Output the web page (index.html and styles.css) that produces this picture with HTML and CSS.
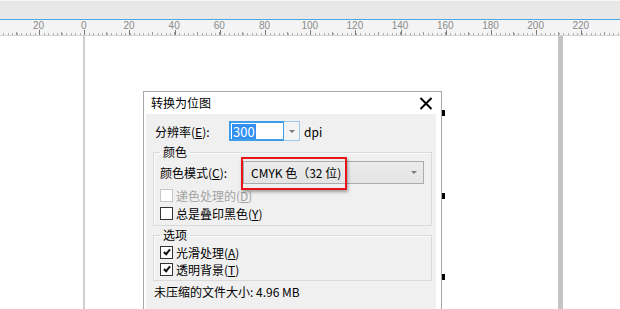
FILE: index.html
```html
<!DOCTYPE html>
<html lang="zh-CN">
<head>
    <meta charset="UTF-8">
    <title>转换为位图</title>
    <link rel="stylesheet" href="styles.css">
</head>
<body>
    <div class="topbar"></div>
    <div class="ruler">
        <div class="ruler-labels">
            <span>20</span><span>0</span><span>20</span><span>40</span><span>60</span><span>80</span><span>100</span>
            <span>120</span><span>140</span><span>160</span><span>180</span><span>200</span><span>220</span>
        </div>
    </div>

    <div class="canvas">
        <div class="page"></div>

        <span class="handle h1"></span>
        <span class="handle h2"></span>
        <span class="handle h3"></span>

        <div class="dialog">
            <div class="titlebar">
                <span class="title">转换为位图</span>
                <svg class="close" width="14" height="13" viewBox="0 0 14 13">
                    <path d="M1.5 1 L12.5 12 M12.5 1 L1.5 12" stroke="#000" stroke-width="2" fill="none"/>
                </svg>
            </div>
            <div class="body">
                <div class="row res-row">
                    <span class="lbl">分辨率(<u>E</u>):</span>
                    <div class="spin">
                        <div class="spin-field"><span class="sel">300</span></div>
                        <div class="spin-btn"><span class="tri"></span></div>
                    </div>
                    <span class="unit">dpi</span>
                </div>

                <fieldset class="group color-group">
                    <legend>颜色</legend>
                    <div class="row mode-row">
                        <span class="mode-lbl">颜色模式(<u>C</u>):</span>
                        <div class="combo">
                            <span>CMYK 色（32 位)</span>
                            <span class="tri"></span>
                        </div>
                    </div>
                    <label class="check disabled"><span class="box"></span>递色处理的(<u>D</u>)</label>
                    <label class="check"><span class="box"></span>总是叠印黑色(<u>Y</u>)</label>
                </fieldset>

                <fieldset class="group opt-group">
                    <legend>选项</legend>
                    <label class="check"><span class="box on"></span>光滑处理(<u>A</u>)</label>
                    <label class="check"><span class="box on"></span>透明背景(<u>T</u>)</label>
                </fieldset>

                <div class="size">未压缩的文件大小: 4.96 MB</div>
            </div>
            <div class="highlight"></div>
        </div>
    </div>
</body>
</html>
```

FILE: styles.css
```css
body { margin: 0; width: 620px; height: 309px; overflow: hidden; background: #fff; font-family: "Noto Sans CJK SC", "Liberation Sans", sans-serif; font-size: 12px; color: #000; }

.topbar { height: 18px; background: #e8e8e8; border-top: 1px solid #f6f6f6; border-bottom: 1px solid #4aa8e4; }
.ruler { height: 15px; background-color: #f4f4f4; border-bottom: 1px solid #d2d2d2;
    background-image:
        repeating-linear-gradient(to right, #7a7a7a 0 1px, transparent 1px 45.2px),
        repeating-linear-gradient(to right, #9a9a9a 0 1px, transparent 1px 22.6px),
        repeating-linear-gradient(to right, #b0b0b0 0 1px, transparent 1px 4.52px);
    background-size: 100% 5px, 100% 3px, 100% 2px;
    background-repeat: no-repeat;
    background-position: 39px 100%, 16.4px 100%, 2.8px 100%;
}
.ruler-labels { display: flex; padding-left: 16px; height: 12px; }
.ruler-labels span { width: 45.2px; flex: none; text-align: center; font-family: "Liberation Sans", sans-serif; font-size: 10px; line-height: 12px; color: #8a8a8a; }

.canvas { position: relative; height: 273px; }
.page { margin-left: 83px; width: 473px; height: 100%; border-left: 2px solid #cfcfcf; border-right: 5px solid #c4c4c4; }

.handle { position: absolute; left: 442px; width: 3px; height: 6px; background: #000; }
.h1 { top: 74px; }
.h2 { top: 157px; }
.h3 { top: 238px; }

.dialog { position: absolute; left: 143px; top: 55px; width: 297px; height: 230px; border: 1px solid #a8a8a8; background: #fff; }
.titlebar { height: 22px; display: flex; align-items: center; justify-content: space-between; padding: 0 8px 0 7px; }
.title { line-height: 22px; }
.close { margin-top: 1px; }
.body { margin: 0 5px 0 2px; background: #f0f0f0; height: 208px; padding-top: 7px; box-sizing: border-box; }

.row { display: flex; align-items: center; }
.lbl { padding-left: 9px; width: 74px; }
u { text-decoration: underline; text-underline-offset: 1px; }

.spin { display: flex; height: 20px; }
.spin-field { width: 51px; border: 2px solid #3d9fec; border-right-width: 1px; background: #fff; display: flex; align-items: center; padding-left: 1px; }
.sel { background: #3390f0; color: #fff; line-height: 15px; padding: 0 1px; font-size: 13px; }
.spin-btn { width: 15px; border: 1px solid #9ec9ee; border-left: none; background: #f4f4f4; display: flex; align-items: center; justify-content: center; }
.tri { width: 0; height: 0; border-left: 3px solid transparent; border-right: 3px solid transparent; border-top: 3px solid #7a7a7a; }
.unit { margin-left: 4px; }

.group { margin: 0 4px 0 7px; border: 1px solid #dadada; box-shadow: inset 1px 1px #fafafa; padding: 0 0 0 6px; min-inline-size: 0; }
.group legend { padding: 0 3px; margin-left: 0; line-height: 14px; }
.color-group { margin-top: 4px; padding-top: 2px; padding-bottom: 3px; }
.opt-group { margin-top: 2px; padding-top: 2px; padding-bottom: 2px; }

.mode-row { height: 23px; }
.mode-lbl { width: 83px; }
.combo { width: 166px; height: 21px; border: 1px solid #acacac; background: linear-gradient(#ececec, #e4e4e4); display: flex; align-items: center; justify-content: space-between; padding: 0 6px 0 7px; }

.check { display: flex; align-items: center; height: 18px; }
.color-group .check:first-of-type { margin-top: 2px; }
.opt-group .check { height: 17px; }
.box { width: 11px; height: 11px; border: 1px solid #333; background: #fff; margin-right: 3px; position: relative; }
.box.on::after { content: ""; position: absolute; left: 3.5px; top: 1px; width: 2px; height: 5px; border: solid #111; border-width: 0 2px 2px 0; transform: rotate(40deg); }
.disabled { color: #a3a3a3; }
.disabled .box { border-color: #c6c6c6; }

.size { padding-left: 8px; margin-top: 3px; line-height: 16px; }

.highlight { position: absolute; left: 97px; top: 65px; width: 102px; height: 29px; border: 2px solid #e8141a; box-shadow: 1px 2px 3px rgba(0,0,0,0.35); }
```
